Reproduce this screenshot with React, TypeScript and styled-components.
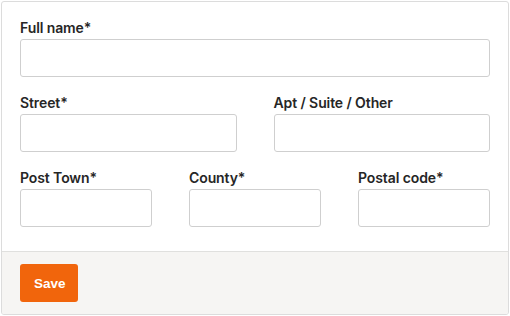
import React from 'react';
import styled, { createGlobalStyle } from 'styled-components';

const GlobalStyle = createGlobalStyle`
  html, body {
    margin: 0;
    padding: 0;
    background: #ffffff;
  }
  body {
    padding: 1px;
    font-family: Inter, "Liberation Sans", Arial, sans-serif;
  }
`;

const Card = styled.form`
  width: 508px;
  box-sizing: border-box;
  border: 1px solid #dcdcdc;
  border-radius: 3px;
  background: #ffffff;
  overflow: hidden;
`;

const Body = styled.div`
  display: flex;
  flex-direction: column;
  gap: 17px;
  padding: 17px 18px 24px;
`;

const Row = styled.div<{ $cols: number }>`
  display: grid;
  grid-template-columns: repeat(${(p) => p.$cols}, minmax(0, 1fr));
  column-gap: 37px;
`;

const Field = styled.label`
  display: flex;
  flex-direction: column;
  min-width: 0;
`;

const Label = styled.span`
  font-size: 14px;
  line-height: 17px;
  font-weight: 600;
  color: #262626;
  margin-bottom: 3px;
  letter-spacing: -0.1px;
  white-space: nowrap;
`;

const Input = styled.input`
  width: 100%;
  min-width: 0;
  height: 38px;
  box-sizing: border-box;
  border: 1px solid #cfcfcf;
  border-radius: 3px;
  background: #ffffff;
  padding: 0 10px;
  font: inherit;
  font-size: 14px;
  outline: none;
`;

const Footer = styled.div`
  border-top: 1px solid #e0e0de;
  background: #f6f5f3;
  padding: 12px 18px;
  display: flex;
`;

const SaveButton = styled.button`
  height: 38px;
  padding: 0 14px;
  width: 58px;
  border: none;
  border-radius: 3px;
  background: #f1650c;
  color: #ffffff;
  font-family: "Liberation Sans", Arial, sans-serif;
  font-weight: 700;
  font-size: 13.5px;
  cursor: pointer;
`;

const fields: { label: string }[][] = [
  [{ label: 'Full name*' }],
  [{ label: 'Street*' }, { label: 'Apt / Suite / Other' }],
  [{ label: 'Post Town*' }, { label: 'County*' }, { label: 'Postal code*' }],
];

export default function App() {
  return (
    <>
      <GlobalStyle />
      <Card onSubmit={(e) => e.preventDefault()}>
        <Body>
          {fields.map((row, i) => (
            <Row key={i} $cols={row.length}>
              {row.map((f) => (
                <Field key={f.label}>
                  <Label>{f.label}</Label>
                  <Input type="text" />
                </Field>
              ))}
            </Row>
          ))}
        </Body>
        <Footer>
          <SaveButton type="submit">Save</SaveButton>
        </Footer>
      </Card>
    </>
  );
}
